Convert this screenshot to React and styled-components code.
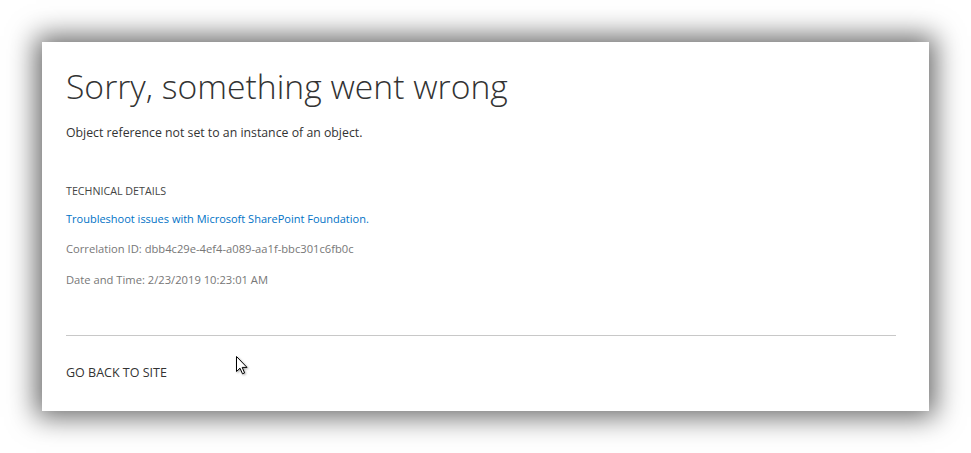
import React from "react";
import styled, { createGlobalStyle } from "styled-components";

const GlobalStyle = createGlobalStyle`
  html, body {
    margin: 0;
    padding: 0;
    background: #ffffff;
  }
  body {
    font-family: "Open Sans", "Noto Sans", sans-serif;
    color: #333333;
  }
`;

const Page = styled.div`
  width: 971px;
  height: 453px;
  padding: 42px 0 0 42px;
  box-sizing: border-box;
  position: relative;
  overflow: hidden;
`;

const Card = styled.div`
  width: 887px;
  height: 369px;
  box-sizing: border-box;
  padding: 22px 33px 0 24px;
  background: #ffffff;
  box-shadow: 0 0 26px 6px rgba(0, 0, 0, 0.6);
`;

const Title = styled.h1`
  margin: 0;
  font-size: 33.7px;
  line-height: 44px;
  font-weight: 300;
  color: #333333;
`;

const Message = styled.p`
  margin: 16px 0 0;
  font-size: 12.3px;
  line-height: 18px;
  color: #333333;
`;

const Caption = styled.div`
  margin-top: 41px;
  font-size: 10.7px;
  line-height: 16px;
  color: #444444;
  text-transform: uppercase;
`;

const Detail = styled.div`
  margin-top: ${(p) => p.gap || 12}px;
  font-size: ${(p) => (p.link ? 11 : 11.2)}px;
  line-height: 18px;
  color: ${(p) => (p.link ? "#0072c6" : "#777777")};
`;

const Link = styled.a`
  color: inherit;
  text-decoration: none;
`;

const Divider = styled.hr`
  margin: 46px 0 0;
  border: 0;
  border-top: 1px solid #c8c8c8;
`;

const BackLink = styled.a`
  display: block;
  margin-top: 28px;
  font-size: 12.5px;
  line-height: 18px;
  color: #333333;
  text-decoration: none;
  text-transform: uppercase;
`;

const Cursor = styled.svg`
  position: absolute;
  left: 236px;
  top: 356px;
  width: 12px;
  height: 19px;
  filter: drop-shadow(1px 1px 1px rgba(0, 0, 0, 0.35));
`;

export default function App() {
  return (
    <>
      <GlobalStyle />
      <Page>
        <Card>
          <Title>Sorry, something went wrong</Title>
          <Message>Object reference not set to an instance of an object.</Message>
          <Caption>Technical Details</Caption>
          <Detail link gap={11}>
            <Link href="#">Troubleshoot issues with Microsoft SharePoint Foundation.</Link>
          </Detail>
          <Detail gap={12}>Correlation ID: dbb4c29e-4ef4-a089-aa1f-bbc301c6fb0c</Detail>
          <Detail gap={13}>Date and Time: 2/23/2019 10:23:01 AM</Detail>
          <Divider />
          <BackLink href="#">Go back to site</BackLink>
        </Card>
        <Cursor viewBox="0 0 12 19">
          <path
            d="M0.5 0.5 L0.5 15.5 L4 12.2 L6.5 17.8 L8.6 16.9 L6.2 11.4 L11 11.4 Z"
            fill="#ffffff"
            stroke="#000000"
            strokeWidth="1"
            strokeLinejoin="miter"
          />
        </Cursor>
      </Page>
    </>
  );
}
